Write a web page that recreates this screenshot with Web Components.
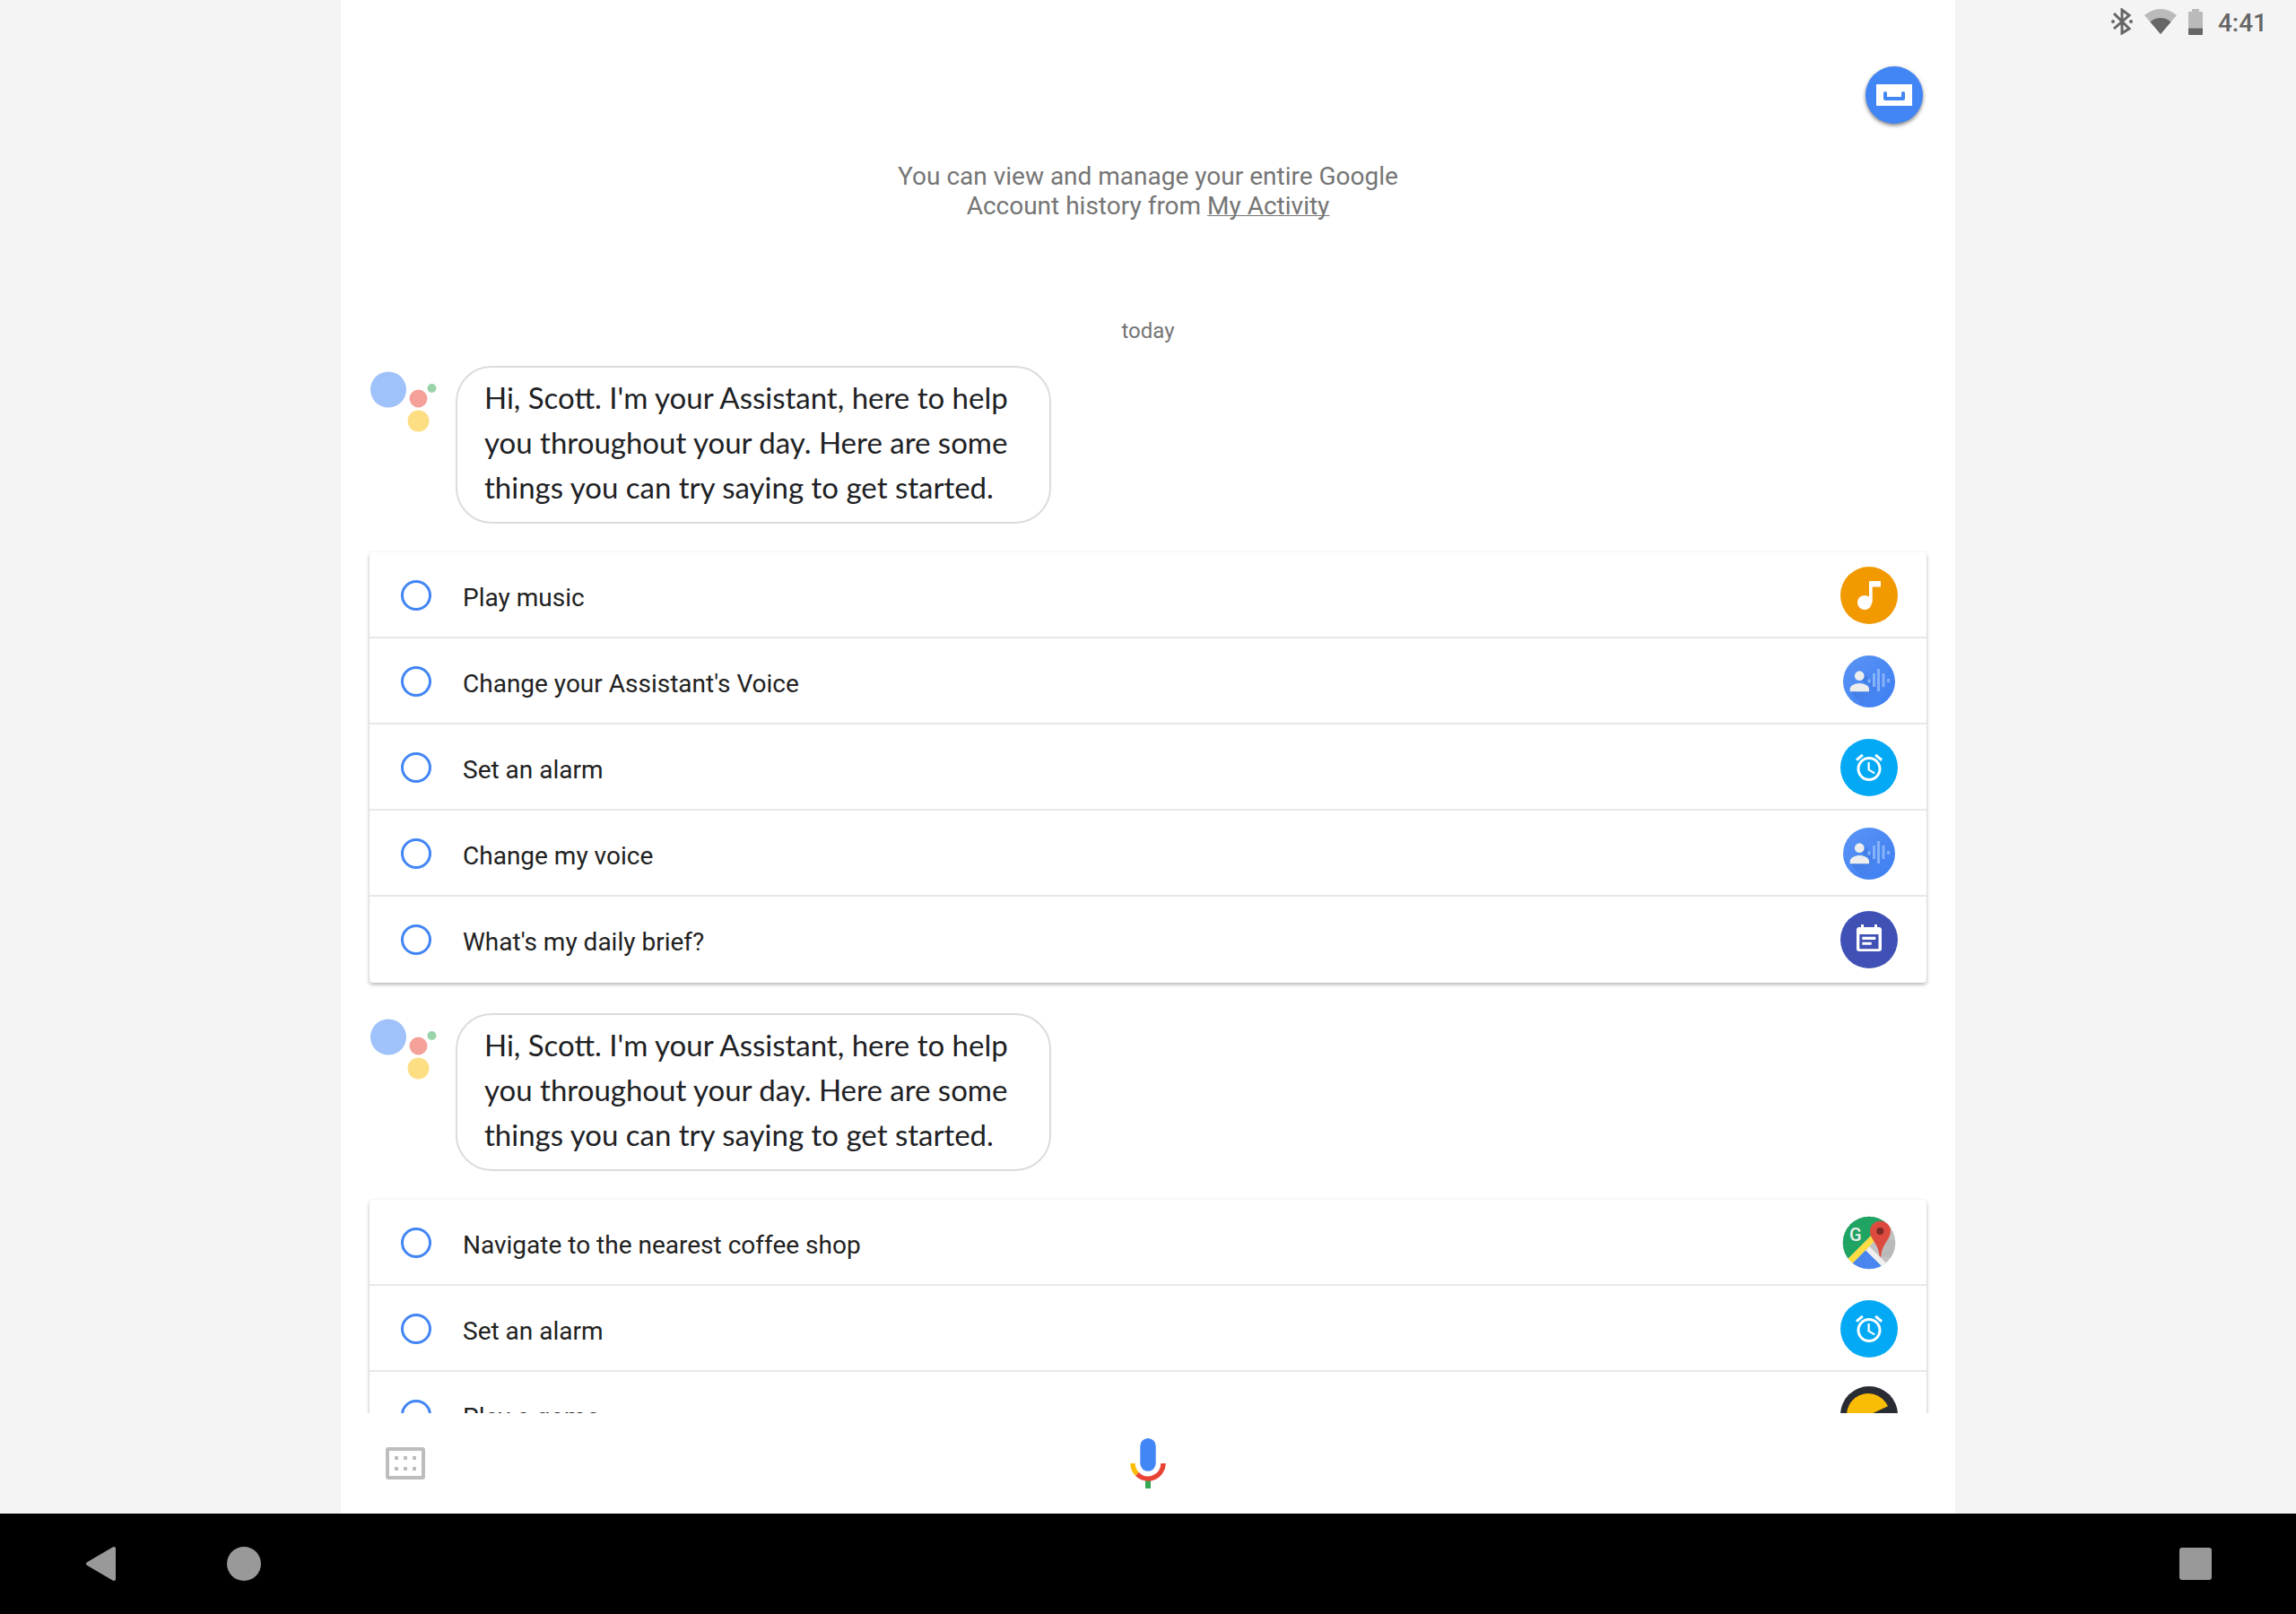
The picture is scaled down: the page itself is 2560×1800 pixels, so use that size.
<!DOCTYPE html>
<html lang="en">
<head>
<meta charset="utf-8">
<title>Assistant</title>
<style>
  body {
    margin: 0;
    background: #f4f4f4;
    font-family: Roboto, "Liberation Sans", sans-serif;
  }
</style>
</head>
<body>
<assistant-screen>
  <status-bar slot="status" time="4:41"></status-bar>

  <chat-notice>You can view and manage your entire Google<br>Account history from <a href="#activity">My Activity</a></chat-notice>
  <chat-day>today</chat-day>

  <chat-message>Hi, Scott. I'm your Assistant, here to help you throughout your day. Here are some things you can try saying to get started.</chat-message>
  <suggestion-list>
    <suggestion-item icon="music">Play music</suggestion-item>
    <suggestion-item icon="voice">Change your Assistant's Voice</suggestion-item>
    <suggestion-item icon="alarm">Set an alarm</suggestion-item>
    <suggestion-item icon="voice">Change my voice</suggestion-item>
    <suggestion-item icon="brief">What's my daily brief?</suggestion-item>
  </suggestion-list>

  <chat-message>Hi, Scott. I'm your Assistant, here to help you throughout your day. Here are some things you can try saying to get started.</chat-message>
  <suggestion-list>
    <suggestion-item icon="maps">Navigate to the nearest coffee shop</suggestion-item>
    <suggestion-item icon="alarm">Set an alarm</suggestion-item>
    <suggestion-item icon="game">Play a game</suggestion-item>
  </suggestion-list>

  <input-bar slot="input"></input-bar>
  <nav-bar slot="nav"></nav-bar>
</assistant-screen>

<script>
const ICONS = {
  music: `
    <circle cx="32" cy="32" r="32" fill="#f29900"/>
    <g fill="#fff">
      <circle cx="27" cy="40" r="8"/>
      <path d="M32 16h13v6.5h-9.3V40H32z"/>
    </g>`,
  voice: `
    <defs>
      <linearGradient id="blue" x1="0" y1="0" x2="1" y2="1">
        <stop offset="0" stop-color="#5a94f5"/>
        <stop offset="1" stop-color="#3d7ef2"/>
      </linearGradient>
      <linearGradient id="shade" x1="0" y1="0" x2="1" y2="1">
        <stop offset="0.2" stop-color="#2a5fc4" stop-opacity="0.4"/>
        <stop offset="0.8" stop-color="#2a5fc4" stop-opacity="0"/>
      </linearGradient>
    </defs>
    <circle cx="32" cy="32" r="29" fill="url(#blue)"/>
    <path d="M25 22l18 18-7 14-10 6-15-17h21v-5l-8-7z" fill="url(#shade)"/>
    <path fill="#86b2fa" d="M30.500 29.500h3v4h-3zM36 23h3v15h-3zM41 18h3v25h-3zM46.500 23h3v15h-3zM52 29h3v4h-3z"/>
    <g fill="#eee">
      <circle cx="21.3" cy="25.7" r="5.4"/>
      <path d="M10.7 43.3v-3c0-4 6-6.300 10.600-6.300S32 36.300 32 40.300v3z"/>
    </g>`,
  alarm: `
    <circle cx="32" cy="32" r="32" fill="#03a9f4"/>
    <path transform="translate(14 14) scale(1.5)" fill="#fff" d="M22 5.720l-4.600-3.860-1.290 1.530 4.600 3.860L22 5.720zM7.880 3.390L6.600 1.860 2 5.710l1.290 1.530 4.590-3.850zM12.500 8H11v6l4.750 2.850.75-1.230-4-2.370V8zM12 4c-4.970 0-9 4.030-9 9s4.020 9 9 9c4.970 0 9-4.030 9-9s-4.030-9-9-9zm0 16c-3.870 0-7-3.130-7-7s3.130-7 7-7 7 3.130 7 7-3.130 7-7 7z"/>`,
  brief: `
    <circle cx="32" cy="32" r="32" fill="#3f51b5"/>
    <path fill="#fff" fill-rule="evenodd" d="M23 15h3v3h12v-3h3v3h2a3 3 0 0 1 3 3v21a3 3 0 0 1-3 3H21a3 3 0 0 1-3-3V21a3 3 0 0 1 3-3h2zM21.300 26v16.300h21.200V26z"/>
    <path fill="#fff" d="M24.300 28.700h15V32h-15zM24.300 34.700h10.400v3H24.300z"/>`,
  maps: `
    <defs>
      <clipPath id="disc"><circle cx="32" cy="32" r="29.3"/></clipPath>
    </defs>
    <g clip-path="url(#disc)">
      <path fill="#c2c2c2" d="M0 0h64v64H0z"/>
      <path fill="#1fa463" d="M0 0h58.300L0 58.300z"/>
      <path fill="#4a86f0" d="M28.200 40.200L52 64H4.400z"/>
      <path fill="#f0f0f0" d="M32.400 36l28 28H52L28.200 40.200z"/>
      <path fill="#ffdd43" d="M-1 59.300L45 13.300v10L4 64.300z"/>
      <path fill="#b0b0b0" d="M53 27l11 3v20l-19-3z" opacity="0.4"/>
    </g>
    <path fill="#dd4b3e" d="M44.500 7.700A11.500 11.500 0 0 1 56 19.200c0 9-10 14.500-10.600 27.400a.9 .9 0 0 1-1.800 0C43 33.700 33 28.200 33 19.200A11.500 11.500 0 0 1 44.500 7.700z"/>
    <circle cx="44.3" cy="19" r="4" fill="#7e2a24"/>
    <text x="10" y="30" font-family="Roboto, sans-serif" font-size="20" font-weight="500" fill="#eee">G</text>`,
  game: `
    <circle cx="32" cy="32" r="32" fill="#292c33"/>
    <path fill="#fbbc05" d="M53 22.300A24 24 0 1 0 53 41.700L32 32z"/>`,
};

class AssistantScreen extends HTMLElement {
  constructor() {
    super();
    this.attachShadow({ mode: "open" });
    this.shadowRoot.innerHTML = `
      <style>
        :host {
          display: flex;
          flex-direction: column;
          height: 100vh;
        }
        .app {
          flex: 1;
          min-height: 0;
          display: grid;
          grid-template-columns: 1fr minmax(0, 1800px) 1fr;
        }
        main {
          grid-column: 2;
          display: flex;
          flex-direction: column;
          min-height: 0;
          background: #fff;
        }
        .chat {
          flex: 1;
          min-height: 0;
          overflow: hidden;
          padding: 74px 32px 0;
        }
        .top {
          display: flex;
          justify-content: flex-end;
          padding: 0 4px;
        }
        .top button {
          width: 64px;
          height: 64px;
          padding: 0;
          border: 0;
          border-radius: 50%;
          background: #4285f4;
          box-shadow: 0 2px 4px rgba(0, 0, 0, 0.5);
        }
        svg {
          display: block;
        }
      </style>

      <div class="app">
        <main>
          <div class="chat">
            <div class="top">
              <button type="button" aria-label="Explore">
                <svg width="64" height="64" viewBox="0 0 64 64" fill="none">
                  <path fill="#fff" d="M12 20h40v24H12z"/>
                  <path d="M22 30v6h20v-6" stroke="#4285f4" stroke-width="4" stroke-linecap="round" stroke-linejoin="round"/>
                </svg>
              </button>
            </div>
            <slot></slot>
          </div>
          <slot name="input"></slot>
        </main>
        <slot name="status"></slot>
      </div>
      <slot name="nav"></slot>
    `;
  }
}

class StatusBar extends HTMLElement {
  constructor() {
    super();
    this.attachShadow({ mode: "open" });
    this.shadowRoot.innerHTML = `
      <style>
        :host {
          grid-column: 3;
          display: flex;
          justify-content: flex-end;
          align-items: center;
          align-self: start;
          height: 48px;
          padding-right: 32px;
          color: #666;
        }
        time {
          margin-left: 16px;
          padding-top: 4px;
          font-size: 28px;
          line-height: 32px;
          font-weight: 500;
        }
        svg {
          display: block;
        }
        svg + svg {
          margin-left: 12px;
        }
      </style>

      <svg width="26" height="30" viewBox="0 0 26 30">
        <path d="M4 6l17 17-8 5V2l8 6L4 23" fill="none" stroke="#666" stroke-width="3"/>
        <circle cx="3" cy="15" r="2" fill="#666"/>
        <circle cx="23" cy="15" r="2" fill="#666"/>
      </svg>
      <svg width="36" height="30" viewBox="0 0 36 30">
        <path d="M0 8a27 27 0 0 1 36 0L18 29z" fill="#bababa"/>
        <path d="M6.500 15.500a17 17 0 0 1 23 0L18 29z" fill="#666"/>
      </svg>
      <svg width="18" height="30" viewBox="0 0 18 30">
        <path d="M5 1h8v3h3a1 1 0 0 1 1 1v18H1V5a1 1 0 0 1 1-1h3z" fill="#bababa"/>
        <path d="M1 22.500h16V29a1 1 0 0 1-1 1H2a1 1 0 0 1-1-1z" fill="#666"/>
      </svg>
      <time></time>
    `;
  }

  connectedCallback() {
    this.shadowRoot.querySelector("time").textContent = this.getAttribute("time");
  }
}

class ChatNotice extends HTMLElement {
  constructor() {
    super();
    this.attachShadow({ mode: "open" });
    this.shadowRoot.innerHTML = `
      <style>
        :host {
          display: block;
          max-width: 600px;
          margin: 42px auto 0;
          color: #757575;
          font-size: 28px;
          line-height: 33px;
          text-align: center;
        }
        ::slotted(a) {
          color: inherit;
          text-decoration-thickness: 1px;
          text-decoration-skip-ink: none;
        }
      </style>
      <slot></slot>
    `;
  }
}

class ChatDay extends HTMLElement {
  constructor() {
    super();
    this.attachShadow({ mode: "open" });
    this.shadowRoot.innerHTML = `
      <style>
        :host {
          display: block;
          margin: 109px 0 25px;
          color: #757575;
          font-size: 24px;
          line-height: 28px;
          text-align: center;
        }
      </style>
      <slot></slot>
    `;
  }
}

class ChatMessage extends HTMLElement {
  constructor() {
    super();
    this.attachShadow({ mode: "open" });
    this.shadowRoot.innerHTML = `
      <style>
        :host {
          display: flex;
          align-items: flex-start;
          gap: 20px;
        }
        svg {
          flex: none;
          margin-top: 6px;
        }
        p {
          box-sizing: border-box;
          max-width: 664px;
          margin: 0;
          padding: 8px 30px 14px;
          border: 2px solid #dadce0;
          border-radius: 40px;
          color: #202124;
          font-family: Lato, Roboto, sans-serif;
          font-size: 33px;
          line-height: 50px;
        }
      </style>

      <svg width="76" height="72" viewBox="0 0 76 72">
        <circle cx="21" cy="20.5" r="20" fill="#a0c2fa"/>
        <circle cx="54.5" cy="30.5" r="10" fill="#f4a19a"/>
        <circle cx="69.5" cy="19" r="5" fill="#99d4a9"/>
        <circle cx="54.5" cy="55.5" r="12" fill="#fdde82"/>
      </svg>
      <p><slot></slot></p>
    `;
  }
}

class SuggestionList extends HTMLElement {
  constructor() {
    super();
    this.attachShadow({ mode: "open" });
    this.shadowRoot.innerHTML = `
      <style>
        :host {
          display: block;
          margin: 32px 0 34px;
          border-radius: 4px;
          background: #fff;
          box-shadow: 0 2px 4px rgba(0, 0, 0, 0.3);
        }
        ::slotted(:not(:last-child)) {
          border-bottom: 2px solid #e8e8e8;
        }
      </style>
      <slot></slot>
    `;
  }
}

class SuggestionItem extends HTMLElement {
  constructor() {
    super();
    this.attachShadow({ mode: "open" });
    this.shadowRoot.innerHTML = `
      <style>
        :host {
          display: block;
          box-sizing: border-box;
          height: 96px;
        }
        label {
          display: flex;
          align-items: center;
          height: 96px;
          padding: 0 32px 0 35px;
        }
        input {
          appearance: none;
          box-sizing: border-box;
          width: 34px;
          height: 34px;
          margin: 0 35px 0 0;
          border: 3px solid #4285f4;
          border-radius: 50%;
        }
        span {
          flex: 1;
          padding-top: 6px;
          color: #212121;
          font-size: 28px;
          line-height: 32px;
        }
        svg {
          display: block;
        }
      </style>

      <label>
        <input type="radio">
        <span><slot></slot></span>
        <svg width="64" height="64" viewBox="0 0 64 64"></svg>
      </label>
    `;
  }

  connectedCallback() {
    this.shadowRoot.querySelector("svg").innerHTML = ICONS[this.getAttribute("icon")];
  }
}

class InputBar extends HTMLElement {
  constructor() {
    super();
    this.attachShadow({ mode: "open" });
    this.shadowRoot.innerHTML = `
      <style>
        :host {
          display: grid;
          grid-template-columns: 1fr auto 1fr;
          align-items: center;
          height: 112px;
          padding: 0 50px;
        }
        button {
          justify-self: start;
          padding: 0;
          border: 0;
          background: none;
        }
        svg {
          display: block;
        }
      </style>

      <button type="button" aria-label="Keyboard">
        <svg width="44" height="36" viewBox="0 0 44 36">
          <rect x="2" y="2" width="40" height="32" rx="1" fill="none" stroke="#bdbdbd" stroke-width="4"/>
          <path fill="#bdbdbd" d="M10 10h4v4h-4zM20 10h4v4h-4zM30 10h4v4h-4zM10 22h4v4h-4zM20 22h4v4h-4zM30 22h4v4h-4z"/>
        </svg>
      </button>
      <button type="button" aria-label="Speak">
        <svg width="48" height="64" viewBox="0 0 48 64" fill="none">
          <rect x="15.3" y="4" width="17.4" height="36.7" rx="8.7" fill="#4285f4"/>
          <path d="M21 50h6v10h-6z" fill="#34a853"/>
          <path d="M7 32A17 17 0 0 0 12 44" stroke="#fbbc05" stroke-width="5.4"/>
          <path d="M12 44A17 17 0 0 0 41 32" stroke="#ea4335" stroke-width="5.4"/>
        </svg>
      </button>
    `;
  }
}

class NavBar extends HTMLElement {
  constructor() {
    super();
    this.attachShadow({ mode: "open" });
    this.shadowRoot.innerHTML = `
      <style>
        :host {
          display: block;
          background: #000;
        }
        nav {
          display: flex;
          height: 112px;
          padding: 0 32px;
        }
        button {
          display: flex;
          align-items: center;
          justify-content: center;
          width: 160px;
          padding: 0;
          border: 0;
          background: none;
        }
        button:last-child {
          margin-left: auto;
        }
      </style>

      <nav>
        <button type="button" aria-label="Back">
          <svg width="40" height="40" viewBox="0 0 40 40">
            <path d="M6 20L35 3v34z" fill="#999" stroke="#999" stroke-width="4" stroke-linejoin="round"/>
          </svg>
        </button>
        <button type="button" aria-label="Home">
          <svg width="40" height="40" viewBox="0 0 40 40">
            <circle cx="20" cy="20" r="19" fill="#999"/>
          </svg>
        </button>
        <button type="button" aria-label="Recent apps">
          <svg width="40" height="40" viewBox="0 0 40 40">
            <rect x="2" y="2" width="36" height="36" rx="3" fill="#999"/>
          </svg>
        </button>
      </nav>
    `;
  }
}

customElements.define("assistant-screen", AssistantScreen);
customElements.define("status-bar", StatusBar);
customElements.define("chat-notice", ChatNotice);
customElements.define("chat-day", ChatDay);
customElements.define("chat-message", ChatMessage);
customElements.define("suggestion-list", SuggestionList);
customElements.define("suggestion-item", SuggestionItem);
customElements.define("input-bar", InputBar);
customElements.define("nav-bar", NavBar);
</script>
</body>
</html>
